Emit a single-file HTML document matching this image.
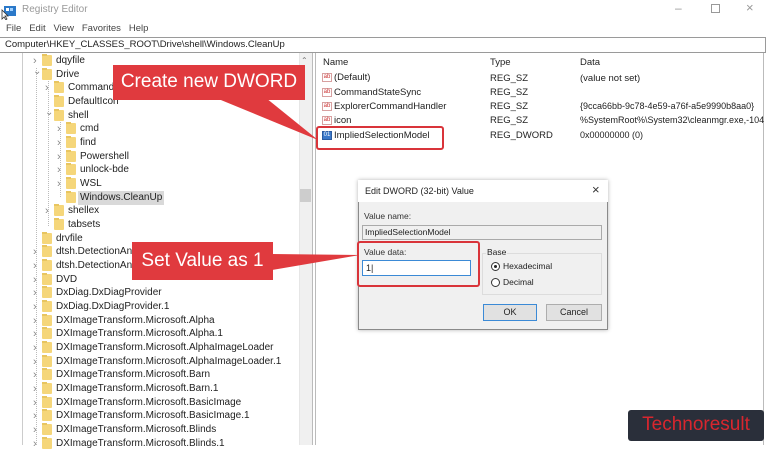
<!DOCTYPE html>
<html><head><meta charset="utf-8"><style>
*{margin:0;padding:0;box-sizing:border-box}
body{width:768px;height:445px;overflow:hidden;background:#fff;font-family:"Liberation Sans",sans-serif;font-size:9.5px;color:#222;position:relative}
.a{position:absolute;white-space:nowrap}
.row{position:absolute;height:14px;line-height:14px;font-size:10px}
.fold{position:absolute;width:10px;height:11px;background:#f5d67a;border-radius:1px;top:1px}
.fold:before{content:"";position:absolute;left:0;top:-1px;width:5px;height:2px;background:#e8c560}
.arr{position:absolute;color:#888;font-size:8px;top:0}
.ab{display:inline-block;width:10px;height:9px;border:1px solid #d8a0a0;color:#c33;font-size:6px;line-height:7px;text-align:center;vertical-align:middle;margin-right:2px;background:#fff}
</style></head><body>
<svg class="a" style="left:1px;top:2px" width="18" height="18"><rect x="3" y="4" width="12" height="10" fill="#2b79c9"/><rect x="5" y="6" width="3" height="3" fill="#fff"/><rect x="9" y="6" width="3" height="3" fill="#9fd0ff"/><path d="M1 8 L1 17 L3 15 L5 18 L6 17 L4 14 L7 14 Z" fill="#fff" stroke="#333" stroke-width="0.8"/></svg>
<div class="a" style="left:22px;top:4px;font-size:10px;color:#999">Registry Editor</div>
<div class="a" style="left:675px;top:1px;color:#999;font-size:12px">&#8211;</div>
<div class="a" style="left:711px;top:4px;width:9px;height:9px;border:1px solid #999"></div>
<div class="a" style="left:746px;top:0px;color:#999;font-size:13px">&#215;</div>
<div class="a" style="left:6px;top:23px;font-size:9.5px;color:#444">File&nbsp;&nbsp;&nbsp;Edit&nbsp;&nbsp;&nbsp;View&nbsp;&nbsp;&nbsp;Favorites&nbsp;&nbsp;&nbsp;Help</div>
<div class="a" style="left:0;top:37px;width:766px;height:16px;border:1px solid #9a9a9a;border-left:none;padding-left:5px;line-height:14px;font-size:9.5px;color:#222">Computer\HKEY_CLASSES_ROOT\Drive\shell\Windows.CleanUp</div>
<div class="a" style="left:22px;top:53px;width:1px;height:392px;background:#ccc"></div>
<div class="a" style="left:299px;top:53px;width:13px;height:392px;background:#f0f0f0;border-left:1px solid #e6e6e6"></div>
<div class="a" style="left:301px;top:56px;color:#777;font-size:8px">&#8963;</div>
<div class="a" style="left:300px;top:189px;width:11px;height:13px;background:#cdcdcd"></div>
<div class="a" style="left:312px;top:53px;width:1px;height:392px;background:#bbb"></div>
<div class="a" style="left:315px;top:53px;width:1px;height:392px;background:#bbb"></div>
<div class="a" style="left:763px;top:53px;width:1px;height:392px;background:#bbb"></div>
<div class="a" style="left:36px;top:68px;width:0;height:377px;border-left:1px dotted #bbb"></div>
<div class="a" style="left:48px;top:81px;width:0;height:145px;border-left:1px dotted #bbb"></div>
<div class="a" style="left:60px;top:122px;width:0;height:75px;border-left:1px dotted #bbb"></div>
<div id="tree"></div>
<script>
var rows=[[1,">","dqyfile"],[1,"v","Drive"],[2,">","Commands"],[2,"","DefaultIcon"],[2,"v","shell"],[3,">","cmd"],[3,">","find"],[3,">","Powershell"],[3,">","unlock-bde"],[3,">","WSL"],[3,"","Windows.CleanUp"],[2,">","shellex"],[2,"","tabsets"],[1,"","drvfile"],[1,">","dtsh.DetectionAndSharing"],[1,">","dtsh.DetectionAndSharing.1"],[1,">","DVD"],[1,">","DxDiag.DxDiagProvider"],[1,">","DxDiag.DxDiagProvider.1"],[1,">","DXImageTransform.Microsoft.Alpha"],[1,">","DXImageTransform.Microsoft.Alpha.1"],[1,">","DXImageTransform.Microsoft.AlphaImageLoader"],[1,">","DXImageTransform.Microsoft.AlphaImageLoader.1"],[1,">","DXImageTransform.Microsoft.Barn"],[1,">","DXImageTransform.Microsoft.Barn.1"],[1,">","DXImageTransform.Microsoft.BasicImage"],[1,">","DXImageTransform.Microsoft.BasicImage.1"],[1,">","DXImageTransform.Microsoft.Blinds"],[1,">","DXImageTransform.Microsoft.Blinds.1"]];
var h="";rows.forEach(function(r,i){var y=54+i*13.67;var x=31+(r[0]-1)*12;
var ar=r[1]==">"?"&#8250;":(r[1]=="v"?"&#8964;":"");
h+='<div class="row" style="left:'+x+'px;top:'+y+'px;width:260px">'+(ar?'<span class="arr" style="left:2px;font-size:'+(r[1]=="v"?'10px;top:-3px':'11px')+'">'+ar+'</span>':'')+'<span class="fold" style="left:11px"></span><span class="a" style="left:25px;top:0;'+(r[2]=="Windows.CleanUp"?'background:#d9d9d9;padding:0 2px;left:23px':'')+'">'+r[2]+'</span></div>';});
document.getElementById("tree").innerHTML=h;
</script>
<div class="a" style="left:323px;top:57px">Name</div>
<div class="a" style="left:490px;top:57px">Type</div>
<div class="a" style="left:580px;top:57px">Data</div>
<div class="a" style="left:322px;top:72px"><span class="ab">ab</span>(Default)</div>
<div class="a" style="left:322px;top:87px"><span class="ab">ab</span>CommandStateSync</div>
<div class="a" style="left:322px;top:101px"><span class="ab">ab</span>ExplorerCommandHandler</div>
<div class="a" style="left:322px;top:115px"><span class="ab">ab</span>icon</div>
<div class="a" style="left:322px;top:130px"><span class="ab" style="background:#3a78c9;border-color:#2a5aa0;color:#fff">01</span>ImpliedSelectionModel</div>
<div class="a" style="left:490px;top:73px">REG_SZ</div>
<div class="a" style="left:490px;top:87px">REG_SZ</div>
<div class="a" style="left:490px;top:101px">REG_SZ</div>
<div class="a" style="left:490px;top:115px">REG_SZ</div>
<div class="a" style="left:490px;top:130px">REG_DWORD</div>
<div class="a" style="left:580px;top:73px">(value not set)</div>
<div class="a" style="left:580px;top:101px;font-size:9px">{9cca66bb-9c78-4e59-a76f-a5e9990b8aa0}</div>
<div class="a" style="left:580px;top:115px;font-size:9px">%SystemRoot%\System32\cleanmgr.exe,-104</div>
<div class="a" style="left:580px;top:130px;font-size:9px">0x00000000 (0)</div>
<div class="a" style="left:316px;top:126px;width:128px;height:24px;border:2px solid #d9343a;border-radius:3px"></div>
<svg class="a" style="left:0;top:0" width="768" height="445">
<polygon points="216,98 266,98 318,140" fill="#e03a3e"/>
<polygon points="250,259 272,254 360,255 272,270" fill="#e03a3e"/>
</svg>
<div class="a" style="left:113px;top:65px;width:192px;height:35px;background:#e03a3e;color:#fff;font-size:19px;line-height:34px;text-align:center">Create new DWORD</div>
<div class="a" style="left:358px;top:180px;width:250px;height:150px;background:#f0f0f0;border:1px solid #8a8a8a;box-shadow:0 0 4px rgba(0,0,0,.3)"></div>
<div class="a" style="left:358px;top:180px;width:250px;height:22px;background:#fff"></div>
<div class="a" style="left:365px;top:186px;font-size:9px">Edit DWORD (32-bit) Value</div>
<div class="a" style="left:592px;top:182px;font-size:13px;color:#333">&#215;</div>
<div class="a" style="left:364px;top:211px;font-size:8.5px;color:#333">Value name:</div>
<div class="a" style="left:362px;top:225px;width:240px;height:15px;border:1px solid #aaa;background:#f0f0f0;font-size:8.5px;line-height:13px;padding-left:2px">ImpliedSelectionModel</div>
<div class="a" style="left:364px;top:247px;font-size:8.5px;color:#333">Value data:</div>
<div class="a" style="left:362px;top:260px;width:109px;height:16px;border:1px solid #3b8ad6;background:#fff;font-size:9px;line-height:14px;padding-left:3px">1|</div>
<div class="a" style="left:482px;top:253px;width:120px;height:42px;border:1px solid #dcdcdc"></div>
<div class="a" style="left:486px;top:247px;font-size:8.5px;background:#f0f0f0;padding:0 1px">Base</div>
<div class="a" style="left:491px;top:262px;width:9px;height:9px;border:1px solid #333;border-radius:50%;background:#fff"><div style="margin:2px;width:3px;height:3px;border-radius:50%;background:#222"></div></div>
<div class="a" style="left:503px;top:261px;font-size:8.5px">Hexadecimal</div>
<div class="a" style="left:491px;top:278px;width:9px;height:9px;border:1px solid #333;border-radius:50%;background:#fff"></div>
<div class="a" style="left:503px;top:277px;font-size:8.5px">Decimal</div>
<div class="a" style="left:483px;top:304px;width:54px;height:17px;border:1px solid #3b8ad6;background:#e1e1e1;font-size:9px;line-height:15px;text-align:center">OK</div>
<div class="a" style="left:546px;top:304px;width:56px;height:17px;border:1px solid #adadad;background:#e1e1e1;font-size:9px;line-height:15px;text-align:center">Cancel</div>
<div class="a" style="left:357px;top:241px;width:123px;height:46px;border:2px solid #d9343a;border-radius:3px"></div>
<div class="a" style="left:132px;top:242px;width:141px;height:38px;background:#e03a3e;color:#fff;font-size:19px;line-height:37px;text-align:center">Set Value as 1</div>
<div class="a" style="left:628px;top:410px;width:136px;height:31px;background:#2a2f3a;border-radius:3px;color:#d8262e;font-size:19px;line-height:30px;text-align:center">Technoresult</div>
</body></html>
